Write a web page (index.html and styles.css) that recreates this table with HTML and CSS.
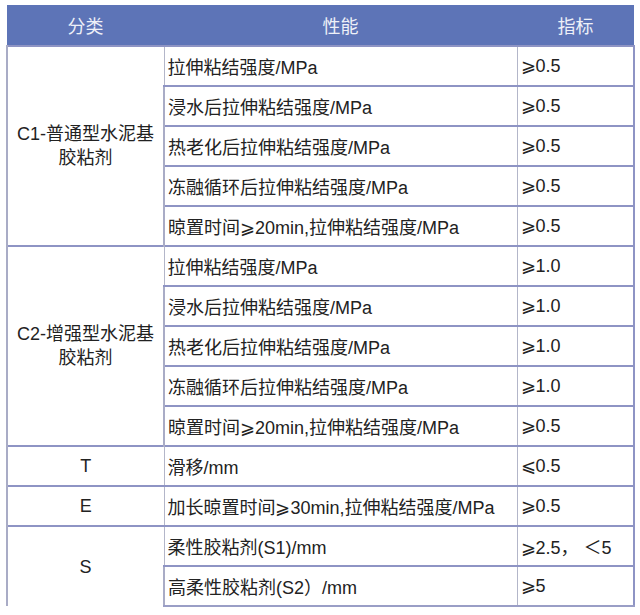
FILE: index.html
```html
<!DOCTYPE html>
<html lang="zh">
<head>
<meta charset="utf-8">
<link rel="stylesheet" href="styles.css">
</head>
<body>
<table class="spec">
  <colgroup>
    <col class="c-cat">
    <col class="c-prop">
    <col class="c-val">
  </colgroup>
  <thead>
    <tr><th>分类</th><th>性能</th><th>指标</th></tr>
  </thead>
  <tbody>
    <tr class="grp"><td class="cat" rowspan="5">C1-普通型水泥基<br>胶粘剂</td><td>拉伸粘结强度/MPa</td><td>⩾0.5</td></tr>
    <tr><td>浸水后拉伸粘结强度/MPa</td><td>⩾0.5</td></tr>
    <tr><td>热老化后拉伸粘结强度/MPa</td><td>⩾0.5</td></tr>
    <tr><td>冻融循环后拉伸粘结强度/MPa</td><td>⩾0.5</td></tr>
    <tr><td>晾置时间⩾20min,拉伸粘结强度/MPa</td><td>⩾0.5</td></tr>
    <tr class="grp"><td class="cat" rowspan="5">C2-增强型水泥基<br>胶粘剂</td><td>拉伸粘结强度/MPa</td><td>⩾1.0</td></tr>
    <tr><td>浸水后拉伸粘结强度/MPa</td><td>⩾1.0</td></tr>
    <tr><td>热老化后拉伸粘结强度/MPa</td><td>⩾1.0</td></tr>
    <tr><td>冻融循环后拉伸粘结强度/MPa</td><td>⩾1.0</td></tr>
    <tr><td>晾置时间⩾20min,拉伸粘结强度/MPa</td><td>⩾0.5</td></tr>
    <tr class="grp"><td class="cat">T</td><td>滑移/mm</td><td>⩽0.5</td></tr>
    <tr class="grp"><td class="cat">E</td><td>加长晾置时间⩾30min,拉伸粘结强度/MPa</td><td>⩾0.5</td></tr>
    <tr class="grp"><td class="cat" rowspan="2">S</td><td>柔性胶粘剂(S1)/mm</td><td>⩾2.5，&nbsp;＜5</td></tr>
    <tr><td>高柔性胶粘剂(S2）/mm</td><td>⩾5</td></tr>
  </tbody>
</table>
</body>
</html>
```
FILE: styles.css
```css
html, body {
  margin: 0;
  padding: 0;
  background: #ffffff;
}
body {
  font-family: "Liberation Sans", "Noto Sans CJK SC", sans-serif;
  color: #222222;
}
.spec {
  margin: 5px 0 0 6px;
  border-collapse: collapse;
  table-layout: fixed;
  width: 627px;
  font-size: 18px;
}
.c-cat { width: 157px; }
.c-prop { width: 353px; }
.c-val { width: 117px; }
.spec th {
  height: 40px;
  padding: 0;
  background: #5d74b7;
  color: #eef0f8;
  font-weight: normal;
  text-align: center;
  border: none;
}
.spec td {
  height: 38px;
  padding: 0 0 0 3px;
  border-top: 2px solid #8e94c4;
  border-left: 1px solid #b3b6c9;
  border-right: 1px solid #b3b6c9;
  white-space: nowrap;
  vertical-align: middle;
}
.spec td.cat {
  text-align: center;
  padding: 0;
  line-height: 24px;
}
.spec tbody tr:last-child td {
  border-bottom: 2px solid #9a9ec6;
}
.spec td:first-child {
  border-left: 2px solid #a9acc6;
}
.spec td:last-child {
  border-right: 2px solid #8e94c4;
}
```
